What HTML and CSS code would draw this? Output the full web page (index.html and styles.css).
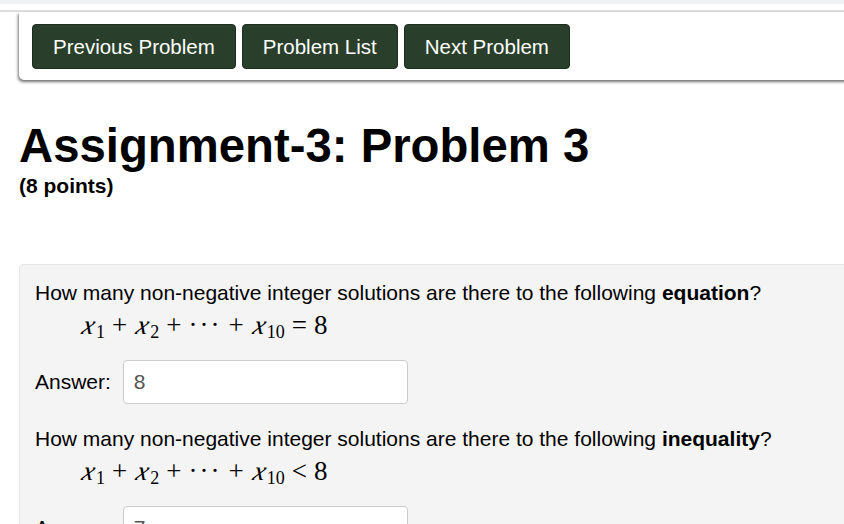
FILE: index.html
```html
<!DOCTYPE html>
<html lang="en">
<head>
  <meta charset="UTF-8" />
  <meta name="viewport" content="width=device-width, initial-scale=1.0"/>
  <title>Assignment-3: Problem 3</title>
  <link rel="stylesheet" href="styles.css">
</head>
<body>

  <div class="top-strip"></div>
  <div class="top-rule"></div>

  <div class="page">
    <div class="problem-nav">
      <a class="nav-btn" href="#">Previous Problem</a>
      <a class="nav-btn" href="#">Problem List</a>
      <a class="nav-btn" href="#">Next Problem</a>
    </div>

    <h1 class="problem-title">Assignment-3: Problem 3</h1>
    <p class="points">(8 points)</p>

    <div class="problem-body">
      <p class="question">How many non-negative integer solutions are there to the following <b>equation</b>?</p>
      <div class="math">
        <i>x</i><sub>1</sub><span class="op">+</span><i>x</i><sub>2</sub><span class="op">+</span><span class="dots">&middot;&middot;&middot;</span><span class="op">+</span><i>x</i><sub>10</sub><span class="op">=</span>8
      </div>
      <div class="answer-row">
        <label for="ans1">Answer:</label>
        <input type="text" id="ans1" value="8" />
      </div>

      <p class="question">How many non-negative integer solutions are there to the following <b>inequality</b>?</p>
      <div class="math">
        <i>x</i><sub>1</sub><span class="op">+</span><i>x</i><sub>2</sub><span class="op">+</span><span class="dots">&middot;&middot;&middot;</span><span class="op">+</span><i>x</i><sub>10</sub><span class="op">&lt;</span>8
      </div>
      <div class="answer-row">
        <label for="ans2">Answer:</label>
        <input type="text" id="ans2" value="7" />
      </div>
    </div>
  </div>

</body>
</html>
```

FILE: styles.css
```css
* {
  box-sizing: border-box;
  margin: 0;
  padding: 0;
}

html, body {
  overflow: hidden;
}

body {
  font-family: "Liberation Sans", Arial, sans-serif;
  background: white;
  color: black;
}

.top-strip {
  height: 4px;
  background-color: #eff1f3;
}

.top-rule {
  height: 2px;
  margin-top: 6px;
  background-color: #dddddd;
}

.page {
  width: 900px;
  padding-left: 19px;
}

.problem-nav {
  display: flex;
  gap: 6px;
  padding: 12px 13px 10px;
  height: 68px;
  background: white;
  border-radius: 0 0 0 5px;
  box-shadow: -1px 2px 3px rgba(0, 0, 0, 0.55);
}

.nav-btn {
  display: block;
  height: 45px;
  padding: 0 20px;
  line-height: 43px;
  font-size: 20.5px;
  color: white;
  text-decoration: none;
  background-color: #2a3f2b;
  border: 1px solid #1d2c1e;
  border-radius: 4px;
}

.problem-title {
  margin-top: 38px;
  font-size: 47.3px;
  font-weight: bold;
  line-height: 56px;
}

.points {
  font-size: 21px;
  font-weight: bold;
  line-height: 24px;
}

.problem-body {
  margin-top: 66px;
  padding: 13px 15px;
  background-color: #f4f4f4;
  border: 1px solid #e6e6e6;
  border-radius: 4px;
  height: 400px;
}

.question {
  font-size: 21px;
  line-height: 30px;
}

.math {
  font-family: "Liberation Serif", "DejaVu Serif", serif;
  font-size: 27px;
  line-height: 34px;
  padding-left: 45px;
}

.math i {
  display: inline-block;
  font-style: italic;
  transform: skewX(-14deg);
  margin: 0 1px 0 3px;
}

.math sub {
  font-size: 18px;
  vertical-align: -4px;
  line-height: 0;
}

.op {
  padding: 0 7px;
}

.dots {
  letter-spacing: 2px;
}

.answer-row {
  display: flex;
  align-items: center;
  gap: 12px;
  margin: 18px 0 20px;
  font-size: 21px;
}

.answer-row input {
  width: 285px;
  height: 44px;
  padding: 0 10px;
  font-family: "Liberation Sans", Arial, sans-serif;
  font-size: 21px;
  color: #555555;
  background: white;
  border: 1px solid #cccccc;
  border-radius: 4px;
}
```
